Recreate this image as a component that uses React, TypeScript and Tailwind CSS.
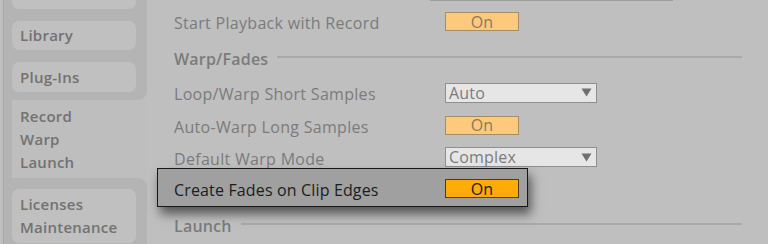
import React from "react";

const font = { fontFamily: '"Open Sans", "Noto Sans", sans-serif' };

function SideTab({ lines, className = "" }: { lines: string[]; className?: string }) {
  return (
    <div className={`rounded-[7px] bg-[#c0c0c0] px-[8px] flex flex-col justify-center ${className}`}>
      {lines.map((l) => (
        <div key={l} className="text-[15px] leading-[23px] font-semibold tracking-[0.25px] text-[#727272]">
          {l}
        </div>
      ))}
    </div>
  );
}

function Toggle({ active = false }: { active?: boolean }) {
  return (
    <div
      className={
        active
          ? "w-[74px] h-[19px] border border-[#4a3c1c] bg-[#ffac08] text-[#1b1b1b] flex items-center justify-center text-[16px] leading-none"
          : "w-[74px] h-[19px] border border-[#a58e66] bg-[#fdc97d] text-[#8d7a5a] flex items-center justify-center text-[16px] leading-none"
      }
    >
      On
    </div>
  );
}

function Dropdown({ value }: { value: string }) {
  return (
    <div className="w-[152px] h-[20px] border border-[#8f8f8f] bg-[#e6e6e6] flex items-center justify-between pl-[3px] pr-[4px]">
      <span className="text-[16px] leading-none tracking-[0.2px] text-[#7c7c7c]">{value}</span>
      <svg width="11" height="9" viewBox="0 0 11 9">
        <path d="M0.5 0.5 H10.5 L5.5 8.5 Z" fill="#6f6f6f" />
      </svg>
    </div>
  );
}

function Row({ label, children, h }: { label: string; children: React.ReactNode; h: string }) {
  return (
    <div className={`flex items-center ${h}`}>
      <div className="w-[271px] pt-[3px] text-[16px] tracking-[0.3px] text-[#7b7b7b]">{label}</div>
      {children}
    </div>
  );
}

function Section({ title, h }: { title: string; h: string }) {
  return (
    <div className={`flex items-center gap-[9px] pr-[26px] ${h}`}>
      <div className="pt-[3px] text-[16px] font-semibold tracking-[0.2px] text-[#7b7b7b]">{title}</div>
      <div className="flex-1 h-[2px] bg-[#a9a9a9]" />
    </div>
  );
}

export default function App() {
  return (
    <div className="w-[768px] h-[244px] overflow-hidden bg-[#bfbfbf] flex" style={font}>
      {/* sidebar */}
      <div className="w-[147px] flex shrink-0">
        <div className="w-[3px]" />
        <div className="w-[1px] bg-[#a8a8a8]" />
        <div className="flex-1 flex flex-col">
          <div className="h-[100px] bg-[#b4b4b4] rounded-br-[9px] pl-[8px] pr-[11px] flex flex-col gap-[12px]">
            <SideTab lines={["Folder"]} className="mt-[-20px] h-[29px]" />
            <SideTab lines={["Library"]} className="h-[29px]" />
            <SideTab lines={["Plug-Ins"]} className="h-[30px]" />
          </div>
          <div className="h-[78px] flex">
            <div className="w-[8px] bg-[#b4b4b4]" />
            <div className="flex-1 mt-[2px] rounded-l-[7px] bg-[#bebebe] px-[8px] pt-[3px] flex flex-col">
              {["Record", "Warp", "Launch"].map((l) => (
                <div key={l} className="text-[15px] leading-[23px] font-semibold tracking-[0.25px] text-[#727272]">
                  {l}
                </div>
              ))}
            </div>
          </div>
          <div className="flex-1 bg-[#b4b4b4] rounded-tr-[9px] pl-[8px] pr-[11px] pt-[11px]">
            <SideTab lines={["Licenses", "Maintenance"]} className="h-[54px]" />
          </div>
        </div>
      </div>

      {/* main */}
      <div className="flex-1 flex flex-col pl-[27px]">
        <div className="h-[6px] flex">
          <div className="ml-[256px] w-[243px] h-[1px] bg-[#9d9d9d]" />
        </div>
        <Row label="Start Playback with Record" h="h-[32px]">
          <Toggle />
        </Row>
        <Section title="Warp/Fades" h="h-[40px]" />
        <Row label="Loop/Warp Short Samples" h="h-[33px]">
          <Dropdown value="Auto" />
        </Row>
        <Row label="Auto-Warp Long Samples" h="h-[33px]">
          <Toggle />
        </Row>
        <Row label="Default Warp Mode" h="h-[32px]">
          <Dropdown value="Complex" />
        </Row>
        <div className="relative h-[32px] flex items-center">
          <div className="absolute left-[-17px] top-[-5px] w-[371px] h-[39px] bg-[#a0a0a0] border border-[#161616] shadow-[3px_7px_10px_rgba(0,0,0,0.55)]" />
          <div className="relative w-[271px] pt-[3px] text-[16px] tracking-[0.15px] text-[#1c1c1c]">Create Fades on Clip Edges</div>
          <div className="relative">
            <Toggle active />
          </div>
        </div>
        <Section title="Launch" h="h-[40px]" />
      </div>
    </div>
  );
}
